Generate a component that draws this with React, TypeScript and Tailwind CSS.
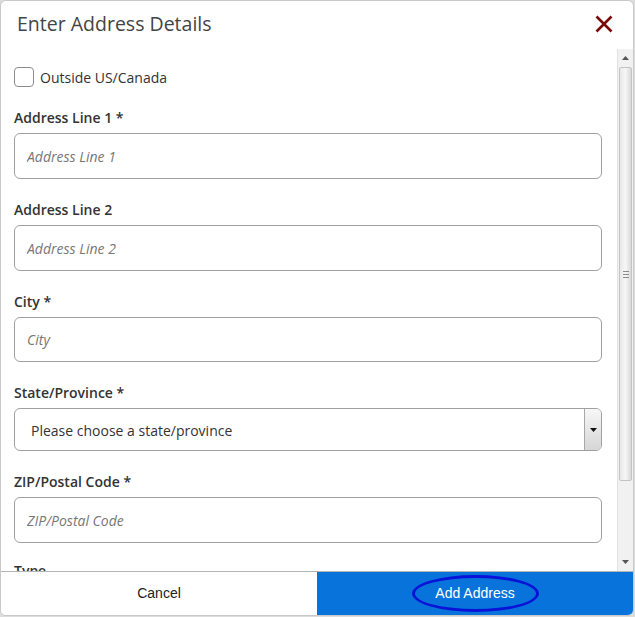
import React from "react";

const font = { fontFamily: '"Open Sans", "Liberation Sans", sans-serif' };

function Field({ label, placeholder, h = 'h-[46px]' }: { label: string; placeholder: string; h?: string }) {
    return (
        <div className="mb-[21px]">
            <p className="mb-[5px] text-[14px] font-semibold leading-[20px] text-[#333]">{label}</p>
            <input
                className={h + " block w-full rounded-[6px] border border-[#a0a0a0] px-[12px] text-[14px] italic text-[#333] outline-none placeholder:text-[#777]"}
                placeholder={placeholder}
                type="text"
            />
        </div>
    );
}

function ScrollBar() {
    return (
        <div className="flex w-[16px] flex-col border-l border-[#e2e2e2] bg-[#f1f1f1]">
            <div className="flex h-[18px] items-center justify-center">
                <svg width="7" height="4" viewBox="0 0 7 4"><path d="M0 4 L3.5 0 L7 4 Z" fill="#555" /></svg>
            </div>
            <div className="mx-[1px] flex h-[414px] items-center justify-center rounded-[2px] border border-[#c4c4c4] bg-gradient-to-r from-[#e8e8e8] via-[#f6f6f6] to-[#d9d9d9]">
                <div className="flex flex-col gap-[2px]">
                    <div className="h-[1px] w-[6px] bg-[#8a8a8a]" />
                    <div className="h-[1px] w-[6px] bg-[#8a8a8a]" />
                    <div className="h-[1px] w-[6px] bg-[#8a8a8a]" />
                </div>
            </div>
            <div className="flex-1" />
            <div className="flex h-[18px] items-center justify-center">
                <svg width="7" height="4" viewBox="0 0 7 4"><path d="M0 0 L3.5 4 L7 0 Z" fill="#555" /></svg>
            </div>
        </div>
    );
}

export default function App() {
    return (
        <div className="h-[617px] w-[635px] bg-[#dcdcdc]" style={font}>
            <div className="flex h-[616px] w-[634px] flex-col overflow-hidden rounded-[6px] border border-[#c9c9c9] bg-white">
                {/* header */}
                <div className="flex h-[48px] shrink-0 items-center justify-between pb-[3px] pl-[16px] pr-[20px]">
                    <h1 className="text-[19.5px] leading-[26px] text-[#444]">Enter Address Details</h1>
                    <svg width="18" height="18" viewBox="0 0 18 18">
                        <path d="M1.5 1.5 L16.5 16.5 M16.5 1.5 L1.5 16.5" stroke="#7a0a0a" strokeWidth="2.6" />
                    </svg>
                </div>

                {/* body */}
                <div className="flex min-h-0 flex-1">
                    <div className="min-w-0 flex-1 overflow-hidden pl-[13px] pr-[15px] pt-[18px]">
                        <label className="mb-[21px] flex h-[20px] items-center gap-[6px]">
                            <span className="h-[20px] w-[20px] rounded-[4px] border border-[#8c8c8c] bg-white" />
                            <span className="text-[14px] text-[#333]">Outside US/Canada</span>
                        </label>

                        <Field label="Address Line 1 *" placeholder="Address Line 1" />
                        <Field label="Address Line 2" placeholder="Address Line 2" />
                        <Field label="City *" placeholder="City" h="h-[45px]" />

                        <div className="mb-[21px]">
                            <p className="mb-[5px] text-[14px] font-semibold leading-[20px] text-[#333]">State/Province *</p>
                            <div className="flex h-[43px] w-full overflow-hidden rounded-[6px] border border-[#a0a0a0]">
                                <div className="flex flex-1 items-center pl-[16px] pt-[2px] text-[14px] text-[#333]">
                                    Please choose a state/province
                                </div>
                                <div className="flex w-[17px] items-center justify-center border-l border-[#a8a8a8] bg-gradient-to-b from-[#f7f7f7] to-[#d6d6d6]">
                                    <svg width="7" height="4" viewBox="0 0 7 4"><path d="M0 0 L3.5 4 L7 0 Z" fill="#111" /></svg>
                                </div>
                            </div>
                        </div>

                        <Field label="ZIP/Postal Code *" placeholder="ZIP/Postal Code" />
                        <p className="-mt-[3px] text-[14px] font-semibold leading-[20px] text-[#333]">Type</p>
                    </div>
                    <ScrollBar />
                </div>

                {/* footer */}
                <div className="flex h-[44px] shrink-0 border-t border-[#b5b5b5]" style={{ fontFamily: '"Liberation Sans", Arial, sans-serif' }}>
                    <button className="flex flex-1 items-center justify-center bg-white text-[14px] text-[#222]">Cancel</button>
                    <button className="flex flex-1 items-center justify-center bg-[#0873db] text-[14px] text-white">
                        <span className="flex h-[37px] w-[127px] items-center justify-center rounded-[50%] border-[3px] border-[#0a12d8]">
                            Add Address
                        </span>
                    </button>
                </div>
            </div>
        </div>
    );
}
